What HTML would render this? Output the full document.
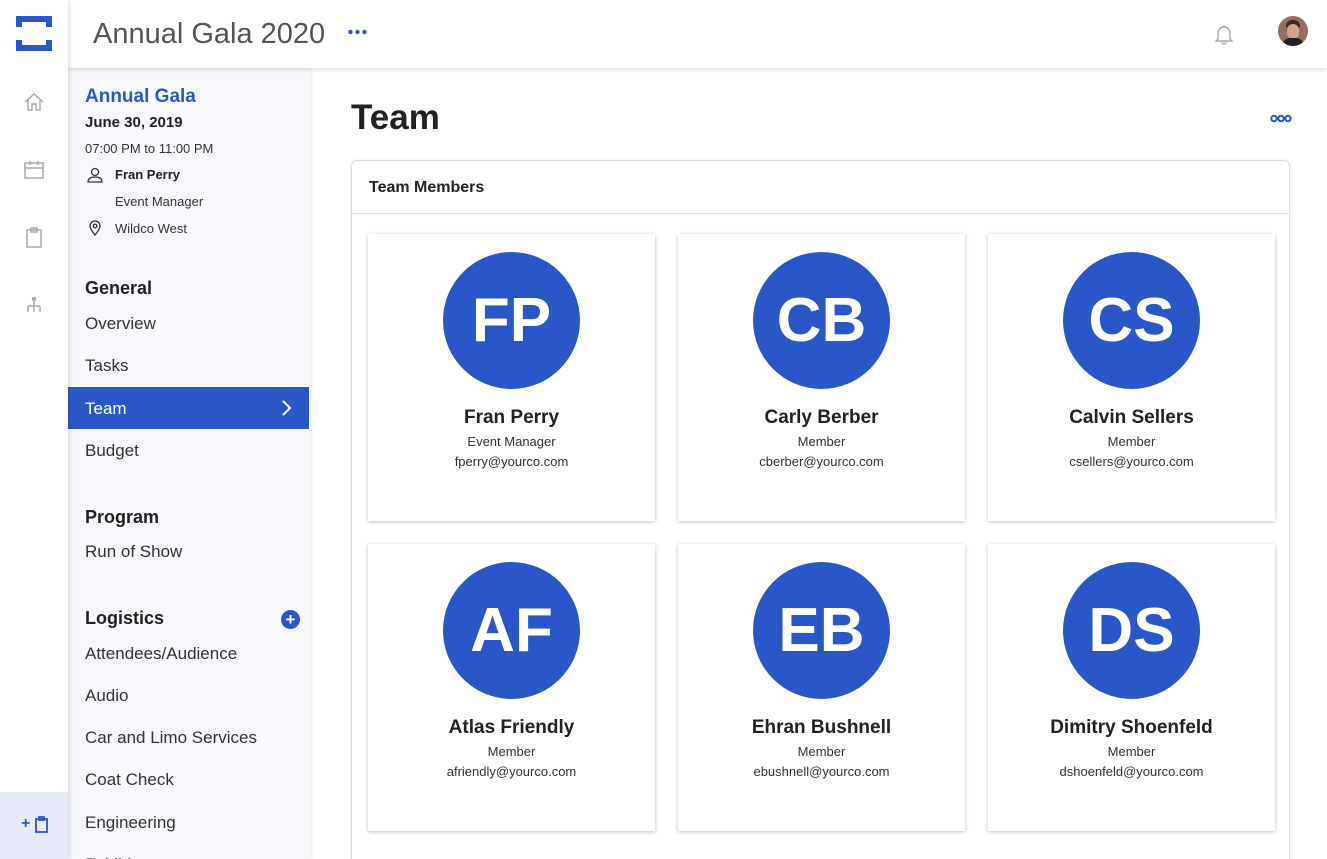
<!DOCTYPE html>
<html><head><meta charset="utf-8"><style>
*{box-sizing:border-box;margin:0;padding:0}
html,body{width:1327px;height:859px;overflow:hidden}
body{background:#fff;font-family:"Liberation Sans","DejaVu Sans",sans-serif;color:#222;position:relative}
.rail{position:absolute;left:0;top:0;width:68px;height:859px;background:#fff;box-shadow:2px 0 4px rgba(0,0,0,.12);z-index:3}
.rail .bot{position:absolute;left:0;top:792px;width:68px;height:67px;background:#e6ebf7}
.hdr{position:absolute;left:68px;top:0;width:1259px;height:68px;background:#fff;box-shadow:0 2px 4px rgba(0,0,0,.12);z-index:2}
.side{position:absolute;left:68px;top:68px;width:242px;height:791px;background:#f7f8fc;box-shadow:2px 0 4px rgba(0,0,0,.08);z-index:1;overflow:hidden}
.abs{position:absolute;white-space:nowrap}
.nav{font-size:17px;color:#333;left:17px}
.sec{font-size:18px;font-weight:bold;color:#222;left:17px}
.panel{position:absolute;left:351px;top:160px;width:939px;height:720px;border:1px solid #ddd;border-radius:6px;box-shadow:0 1px 4px rgba(0,0,0,.12)}
.card{position:absolute;width:287px;height:287px;background:#fff;box-shadow:0 1px 4px rgba(0,0,0,.25)}
.av{position:absolute;left:75px;top:18px;width:137px;height:137px;border-radius:50%;background:#2a57c8;color:#fff;font-weight:bold;font-size:62px;text-align:center;line-height:137px}
.nm{position:absolute;top:173px;width:100%;text-align:center;font-size:19px;font-weight:bold;color:#222}
.rl{position:absolute;top:200px;width:100%;text-align:center;font-size:13px;color:#333}
.em{position:absolute;top:220px;width:100%;text-align:center;font-size:13px;color:#333}
</style></head><body>
<div class="rail">
<svg style="position:absolute;left:16px;top:16px" width="36" height="35"><path d="M0 0h36v11h-6V6H6v5H0zM0 24h6v5h24v-5h6v11H0z" fill="#2a57c8"/></svg>
<svg style="position:absolute;left:23px;top:91px" width="22" height="22" fill="none" stroke="#aaa" stroke-width="1.5"><path d="M2 11L11 3l9 8M5 9v10h4v-6h4v6h4V9"/></svg>
<svg style="position:absolute;left:23px;top:160px" width="22" height="20" fill="none" stroke="#aaa" stroke-width="1.5"><rect x="2" y="3" width="18" height="15"/><path d="M2 8h18M7 1v4M15 1v4"/></svg>
<svg style="position:absolute;left:25px;top:226px" width="18" height="22" fill="none" stroke="#aaa" stroke-width="1.5"><rect x="2" y="4" width="14" height="17"/><rect x="6" y="2" width="6" height="4"/></svg>
<svg style="position:absolute;left:24px;top:296px" width="20" height="20" fill="none" stroke="#aaa" stroke-width="1.5"><path d="M10 2v14M4 10h12M4 10v6M16 10v6"/><circle cx="10" cy="3" r="1.5"/></svg>
<div class="bot"><span class="abs" style="left:21px;top:23px;color:#2a57c8;font-size:16px;font-weight:bold">+</span>
<svg style="position:absolute;left:35px;top:24px" width="13" height="17" fill="none" stroke="#2a57c8" stroke-width="1.8"><rect x="1" y="3" width="11" height="13"/><rect x="4" y="1" width="5" height="3"/></svg></div>
</div>
<div class="hdr">
<span class="abs" style="left:25px;top:18px;font-size:29px;color:#555">Annual Gala 2020</span>
<svg style="position:absolute;left:280px;top:29px" width="20" height="6" fill="#2a57c8"><circle cx="2.5" cy="3" r="2.2"/><circle cx="9.5" cy="3" r="2.2"/><circle cx="16.5" cy="3" r="2.2"/></svg>
<svg style="position:absolute;left:1146px;top:23px" width="20" height="22" fill="none" stroke="#aaa" stroke-width="1.4"><path d="M4 16V10a6 6 0 0112 0v6l2 2H2zM8 19a2 2 0 004 0M10 2v2"/></svg>
<div style="position:absolute;left:1210px;top:16px;width:30px;height:30px;border-radius:50%;overflow:hidden;background:#9a6e5c">
<div style="position:absolute;left:8px;top:4px;width:14px;height:8px;background:#3a2a22;border-radius:6px 6px 2px 2px"></div>
<div style="position:absolute;left:9px;top:8px;width:12px;height:15px;background:#d4a286;border-radius:6px"></div>
<div style="position:absolute;left:4px;top:22px;width:22px;height:12px;background:#222;border-radius:8px 8px 0 0"></div></div>
</div>
<div class="side">
<span class="abs" style="left:17px;top:18px;font-size:19px;color:#2a57c8;font-weight:bold">Annual Gala</span>
<span class="abs" style="left:17px;top:46px;font-size:15px;font-weight:bold">June 30, 2019</span>
<span class="abs" style="left:17px;top:73px;font-size:13px;color:#333">07:00 PM to 11:00 PM</span>
<svg style="position:absolute;left:19px;top:99px" width="16" height="16" fill="none" stroke="#333" stroke-width="1.3"><circle cx="8" cy="5" r="3.5"/><path d="M1 15c0-4 3-5 7-5s7 1 7 5z"/></svg>
<span class="abs" style="left:47px;top:99px;font-size:13px;font-weight:bold">Fran Perry</span>
<span class="abs" style="left:47px;top:126px;font-size:13px;color:#333">Event Manager</span>
<svg style="position:absolute;left:21px;top:152px" width="12" height="16" fill="none" stroke="#333" stroke-width="1.3"><path d="M6 15C2 10 1 8 1 6a5 5 0 0110 0c0 2-1 4-5 9z"/><circle cx="6" cy="6" r="1.8"/></svg>
<span class="abs" style="left:47px;top:153px;font-size:13px;color:#333">Wildco West</span>
<span class="abs sec" style="top:210px">General</span>
<span class="abs nav" style="top:246px">Overview</span>
<span class="abs nav" style="top:288px">Tasks</span>
<div style="position:absolute;left:0;top:319px;width:241px;height:42px;background:#2a57c8"></div>
<span class="abs nav" style="top:331px;color:#fff">Team</span>
<svg style="position:absolute;left:212px;top:331px" width="12" height="18" fill="none" stroke="#fff" stroke-width="2"><path d="M3 2l7 7-7 7"/></svg>
<span class="abs nav" style="top:373px">Budget</span>
<span class="abs sec" style="top:439px">Program</span>
<span class="abs nav" style="top:474px">Run of Show</span>
<span class="abs sec" style="top:540px">Logistics</span>
<div style="position:absolute;left:213px;top:542px;width:19px;height:19px;border-radius:50%;background:#2a57c8;color:#fff;text-align:center;line-height:19px;font-weight:bold;font-size:17px">+</div>
<span class="abs nav" style="top:576px">Attendees/Audience</span>
<span class="abs nav" style="top:618px">Audio</span>
<span class="abs nav" style="top:660px">Car and Limo Services</span>
<span class="abs nav" style="top:702px">Coat Check</span>
<span class="abs nav" style="top:745px">Engineering</span>
<span class="abs nav" style="top:787px">Exhibit</span>
</div>
<span class="abs" style="left:351px;top:98px;font-size:35px;font-weight:bold;color:#222">Team</span>
<svg style="position:absolute;left:1270px;top:114px" width="22" height="9" fill="none" stroke="#2a57c8" stroke-width="2"><circle cx="4" cy="4.5" r="2.7"/><circle cx="11" cy="4.5" r="2.7"/><circle cx="18" cy="4.5" r="2.7"/></svg>
<div class="panel">
<span class="abs" style="left:17px;top:18px;font-size:16px;font-weight:bold;color:#222">Team Members</span>
<div style="position:absolute;left:0;top:52px;width:100%;border-top:1px solid #ddd"></div>
</div>
<div class="card" style="left:368px;top:234px"><div class="av">FP</div><div class="nm">Fran Perry</div><div class="rl">Event Manager</div><div class="em">fperry@yourco.com</div></div>
<div class="card" style="left:678px;top:234px"><div class="av">CB</div><div class="nm">Carly Berber</div><div class="rl">Member</div><div class="em">cberber@yourco.com</div></div>
<div class="card" style="left:988px;top:234px"><div class="av">CS</div><div class="nm">Calvin Sellers</div><div class="rl">Member</div><div class="em">csellers@yourco.com</div></div>
<div class="card" style="left:368px;top:544px"><div class="av">AF</div><div class="nm">Atlas Friendly</div><div class="rl">Member</div><div class="em">afriendly@yourco.com</div></div>
<div class="card" style="left:678px;top:544px"><div class="av">EB</div><div class="nm">Ehran Bushnell</div><div class="rl">Member</div><div class="em">ebushnell@yourco.com</div></div>
<div class="card" style="left:988px;top:544px"><div class="av">DS</div><div class="nm">Dimitry Shoenfeld</div><div class="rl">Member</div><div class="em">dshoenfeld@yourco.com</div></div>
</body></html>
